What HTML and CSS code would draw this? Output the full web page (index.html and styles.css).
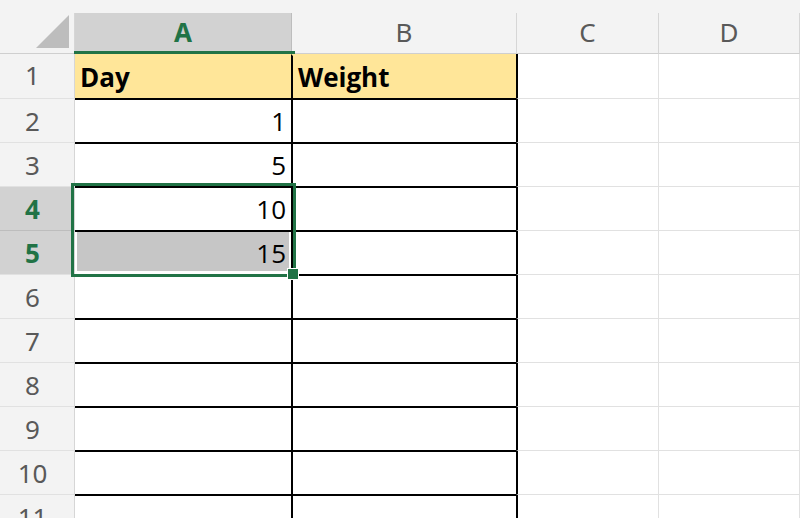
FILE: index.html
```html
<!DOCTYPE html>
<html lang="en">
<head>
    <meta charset="UTF-8">
    <meta name="viewport" content="width=device-width, initial-scale=1.0">
    <title>Book1 - Excel</title>
    <link rel="stylesheet" href="styles.css">
</head>
<body>
    <div class="top-strip"></div>
    <div class="sheet">
        <!-- column headers -->
        <div class="ch corner">
            <svg width="75" height="40" viewBox="0 0 75 40"><polygon points="36,35 69,35 69,2" fill="#bdbdbd"/></svg>
        </div>
        <div class="ch ch--sel">A</div>
        <div class="ch ch--b">B</div>
        <div class="ch">C</div>
        <div class="ch ch--d">D</div>

        <!-- row 1 -->
        <div class="rh rh--first">1</div>
        <div class="cell a head">Day</div>
        <div class="cell b head">Weight</div>
        <div class="cell c first"></div>
        <div class="cell d first"></div>

        <div class="rh">2</div>
        <div class="cell a num">1</div>
        <div class="cell b"></div>
        <div class="cell c"></div>
        <div class="cell d"></div>

        <div class="rh">3</div>
        <div class="cell a num">5</div>
        <div class="cell b"></div>
        <div class="cell c"></div>
        <div class="cell d"></div>

        <div class="rh rh--sel">4</div>
        <div class="cell a num">10</div>
        <div class="cell b"></div>
        <div class="cell c"></div>
        <div class="cell d"></div>

        <div class="rh rh--sel rh--sel2">5</div>
        <div class="cell a num shaded">15</div>
        <div class="cell b"></div>
        <div class="cell c"></div>
        <div class="cell d"></div>

        <div class="rh">6</div>
        <div class="cell a"></div>
        <div class="cell b"></div>
        <div class="cell c"></div>
        <div class="cell d"></div>

        <div class="rh">7</div>
        <div class="cell a"></div>
        <div class="cell b"></div>
        <div class="cell c"></div>
        <div class="cell d"></div>

        <div class="rh">8</div>
        <div class="cell a"></div>
        <div class="cell b"></div>
        <div class="cell c"></div>
        <div class="cell d"></div>

        <div class="rh">9</div>
        <div class="cell a"></div>
        <div class="cell b"></div>
        <div class="cell c"></div>
        <div class="cell d"></div>

        <div class="rh">10</div>
        <div class="cell a"></div>
        <div class="cell b"></div>
        <div class="cell c"></div>
        <div class="cell d"></div>

        <div class="rh">11</div>
        <div class="cell a"></div>
        <div class="cell b"></div>
        <div class="cell c"></div>
        <div class="cell d"></div>

        <!-- selection A4:A5 -->
        <div class="selection"></div>
        <div class="fill-handle"></div>
    </div>
</body>
</html>
```

FILE: styles.css
```css
html{
    font-family: "Open Sans", sans-serif;
}
body{
    margin: 0;
    width: 800px;
    height: 518px;
    overflow: hidden;
    background: #fff;
}
.top-strip{
    height: 13px;
    background: #f3f3f3;
}
.sheet{
    position: relative;
    display: grid;
    grid-template-columns: 75px 216px 225px 142px 142px;
    grid-template-rows: 41px;
    grid-auto-rows: 44px;
}

/* column headers */
.ch{
    box-sizing: border-box;
    background: #f3f3f3;
    border-left: 1px solid #d6d6d6;
    border-bottom: 1px solid #cfcfcf;
    font-family: "Noto Sans", sans-serif;
    font-size: 26px;
    line-height: 38px;
    text-align: center;
    color: #595959;
}
.corner{
    border-left: none;
    border-right: 1px solid #d6d6d6;
    line-height: 0;
}
.ch--sel{
    position: relative;
    border-left: none;
    background: #d2d2d2;
    color: #217346;
    font-weight: bold;
    border-bottom: 3px solid #217346;
}
.ch--sel::after{
    content: "";
    position: absolute;
    left: -1px;
    right: -4px;
    bottom: -3px;
    height: 3px;
    background: #217346;
}
.ch--b{
    border-left: 1px solid #bdbdbd;
}
.ch--d{
    border-right: 1px solid #d6d6d6;
}

/* row headers */
.rh{
    box-sizing: border-box;
    background: #f3f3f3;
    border-right: 1px solid #d6d6d6;
    border-top: 1px solid #e1e1e1;
    padding-right: 9px;
    font-family: "Noto Sans", sans-serif;
    font-size: 26px;
    line-height: 45px;
    text-align: center;
    color: #595959;
}
.rh--first{
    border-top: none;
    line-height: 43px;
}
.rh--sel{
    background: #d2d2d2;
    color: #217346;
    font-weight: bold;
}
.rh--sel2{
    border-top-color: #bdbdbd;
}

/* cells */
.cell{
    box-sizing: border-box;
    border-top: 2px solid #000;
    font-size: 26px;
    line-height: 42px;
    color: #000;
    white-space: nowrap;
}
.a{
    padding: 0 5px;
}
.b{
    border-left: 2px solid #000;
    padding: 0 5px;
}
.c{
    border-left: 2px solid #000;
    border-top: 1px solid #e1e1e1;
}
.d{
    border-left: 1px solid #e1e1e1;
    border-right: 1px solid #e1e1e1;
    border-top: 1px solid #e1e1e1;
}
.c.first,
.d.first{
    border-top: none;
}
.head{
    background: #ffe699;
    border-top-color: transparent;
    font-weight: bold;
}
.num{
    text-align: right;
}
.shaded{
    background: #c6c6c6;
    box-shadow: inset 2px 0 #fff, inset -2px 0 #fff, inset 0 -3px #fff;
}

/* selection overlay */
.selection{
    position: absolute;
    left: 71px;
    top: 170px;
    width: 225px;
    height: 94px;
    box-sizing: border-box;
    border: 3px solid #217346;
    pointer-events: none;
}
.fill-handle{
    position: absolute;
    left: 287px;
    top: 255px;
    width: 12px;
    height: 12px;
    box-sizing: border-box;
    background: #217346;
    border: 1px solid #fff;
}
```
